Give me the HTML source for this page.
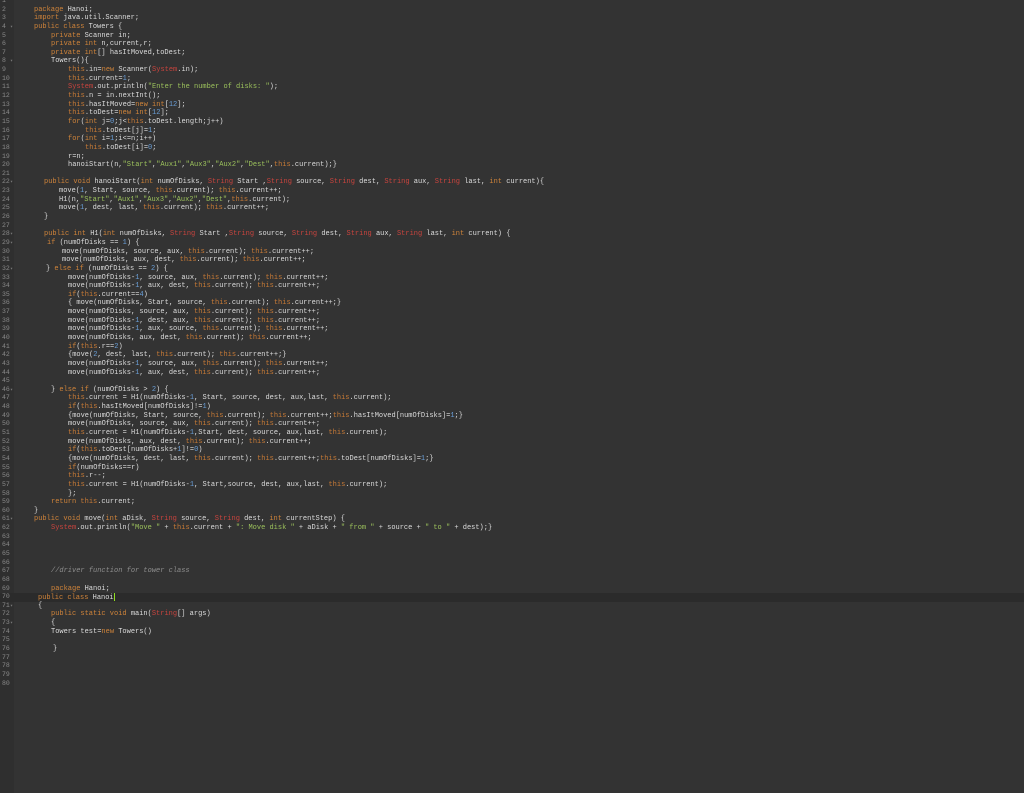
<!DOCTYPE html>
<html><head><meta charset="utf-8"><style>
html,body{margin:0;padding:0;width:1024px;height:793px;overflow:hidden;background:#333333;}
#g{position:absolute;left:0;top:0;width:14px;height:793px;background:#2f2f2f;}
#code{position:absolute;left:0;top:-3px;width:1024px;font-family:"Liberation Mono",monospace;font-size:7px;color:#dcdcdc;}
.l{position:relative;height:8.65px;line-height:8.65px;white-space:pre;}
.l .nm{position:absolute;left:2px;top:0;color:#8a8a8a;font-size:6.5px;}
.l .f{position:absolute;left:10px;top:0;color:#777;font-size:5px;}
.l .t{position:absolute;top:0;}
.k{color:#d0843a}.h{color:#c77a36}.s{color:#9cc25c}.n{color:#6a9fd8}.r{color:#c9443e}.c{color:#8f8f8f;font-style:italic}
.hl{background:#2b2b2b}
.cur{display:inline-block;width:1px;height:8px;background:#8fe020;vertical-align:middle}
</style></head><body>
<div id="g"></div>
<div id="code">
<div class="l"><span class="nm">1</span></div>
<div class="l"><span class="nm">2</span><span class="t" style="left:34px"><span class="k">package</span> Hanoi;</span></div>
<div class="l"><span class="nm">3</span><span class="t" style="left:34px"><span class="k">import</span> java.util.Scanner;</span></div>
<div class="l"><span class="nm">4</span><span class="f">▾</span><span class="t" style="left:34px"><span class="k">public class</span> Towers {</span></div>
<div class="l"><span class="nm">5</span><span class="t" style="left:51px"><span class="k">private</span> Scanner in;</span></div>
<div class="l"><span class="nm">6</span><span class="t" style="left:51px"><span class="k">private int</span> n,current,r;</span></div>
<div class="l"><span class="nm">7</span><span class="t" style="left:51px"><span class="k">private int</span>[] hasItMoved,toDest;</span></div>
<div class="l"><span class="nm">8</span><span class="f">▾</span><span class="t" style="left:51px">Towers(){</span></div>
<div class="l"><span class="nm">9</span><span class="t" style="left:68px"><span class="h">this</span>.in=<span class="k">new</span> Scanner(<span class="r">System</span>.in);</span></div>
<div class="l"><span class="nm">10</span><span class="t" style="left:68px"><span class="h">this</span>.current=<span class="n">1</span>;</span></div>
<div class="l"><span class="nm">11</span><span class="t" style="left:68px"><span class="r">System</span>.out.println(<span class="s">"Enter the number of disks: "</span>);</span></div>
<div class="l"><span class="nm">12</span><span class="t" style="left:68px"><span class="h">this</span>.n = in.nextInt();</span></div>
<div class="l"><span class="nm">13</span><span class="t" style="left:68px"><span class="h">this</span>.hasItMoved=<span class="k">new int</span>[<span class="n">12</span>];</span></div>
<div class="l"><span class="nm">14</span><span class="t" style="left:68px"><span class="h">this</span>.toDest=<span class="k">new int</span>[<span class="n">12</span>];</span></div>
<div class="l"><span class="nm">15</span><span class="t" style="left:68px"><span class="k">for</span>(<span class="k">int</span> j=<span class="n">0</span>;j&lt;<span class="h">this</span>.toDest.length;j++)</span></div>
<div class="l"><span class="nm">16</span><span class="t" style="left:85px"><span class="h">this</span>.toDest[j]=<span class="n">1</span>;</span></div>
<div class="l"><span class="nm">17</span><span class="t" style="left:68px"><span class="k">for</span>(<span class="k">int</span> i=<span class="n">1</span>;i&lt;=n;i++)</span></div>
<div class="l"><span class="nm">18</span><span class="t" style="left:85px"><span class="h">this</span>.toDest[i]=<span class="n">0</span>;</span></div>
<div class="l"><span class="nm">19</span><span class="t" style="left:68px">r=n;</span></div>
<div class="l"><span class="nm">20</span><span class="t" style="left:68px">hanoiStart(n,<span class="s">"Start"</span>,<span class="s">"Aux1"</span>,<span class="s">"Aux3"</span>,<span class="s">"Aux2"</span>,<span class="s">"Dest"</span>,<span class="h">this</span>.current);}</span></div>
<div class="l"><span class="nm">21</span></div>
<div class="l"><span class="nm">22</span><span class="f">▾</span><span class="t" style="left:44px"><span class="k">public void</span> hanoiStart(<span class="k">int</span> numOfDisks, <span class="r">String</span> Start ,<span class="r">String</span> source, <span class="r">String</span> dest, <span class="r">String</span> aux, <span class="r">String</span> last, <span class="k">int</span> current){</span></div>
<div class="l"><span class="nm">23</span><span class="t" style="left:59px">move(<span class="n">1</span>, Start, source, <span class="h">this</span>.current); <span class="h">this</span>.current++;</span></div>
<div class="l"><span class="nm">24</span><span class="t" style="left:59px">H1(n,<span class="s">"Start"</span>,<span class="s">"Aux1"</span>,<span class="s">"Aux3"</span>,<span class="s">"Aux2"</span>,<span class="s">"Dest"</span>,<span class="h">this</span>.current);</span></div>
<div class="l"><span class="nm">25</span><span class="t" style="left:59px">move(<span class="n">1</span>, dest, last, <span class="h">this</span>.current); <span class="h">this</span>.current++;</span></div>
<div class="l"><span class="nm">26</span><span class="t" style="left:44px">}</span></div>
<div class="l"><span class="nm">27</span></div>
<div class="l"><span class="nm">28</span><span class="f">▾</span><span class="t" style="left:44px"><span class="k">public int</span> H1(<span class="k">int</span> numOfDisks, <span class="r">String</span> Start ,<span class="r">String</span> source, <span class="r">String</span> dest, <span class="r">String</span> aux, <span class="r">String</span> last, <span class="k">int</span> current) {</span></div>
<div class="l"><span class="nm">29</span><span class="f">▾</span><span class="t" style="left:47px"><span class="k">if</span> (numOfDisks == <span class="n">1</span>) {</span></div>
<div class="l"><span class="nm">30</span><span class="t" style="left:62px">move(numOfDisks, source, aux, <span class="h">this</span>.current); <span class="h">this</span>.current++;</span></div>
<div class="l"><span class="nm">31</span><span class="t" style="left:62px">move(numOfDisks, aux, dest, <span class="h">this</span>.current); <span class="h">this</span>.current++;</span></div>
<div class="l"><span class="nm">32</span><span class="f">▾</span><span class="t" style="left:46px">} <span class="k">else if</span> (numOfDisks == <span class="n">2</span>) {</span></div>
<div class="l"><span class="nm">33</span><span class="t" style="left:68px">move(numOfDisks-<span class="n">1</span>, source, aux, <span class="h">this</span>.current); <span class="h">this</span>.current++;</span></div>
<div class="l"><span class="nm">34</span><span class="t" style="left:68px">move(numOfDisks-<span class="n">1</span>, aux, dest, <span class="h">this</span>.current); <span class="h">this</span>.current++;</span></div>
<div class="l"><span class="nm">35</span><span class="t" style="left:68px"><span class="k">if</span>(<span class="h">this</span>.current==<span class="n">4</span>)</span></div>
<div class="l"><span class="nm">36</span><span class="t" style="left:68px">{ move(numOfDisks, Start, source, <span class="h">this</span>.current); <span class="h">this</span>.current++;}</span></div>
<div class="l"><span class="nm">37</span><span class="t" style="left:68px">move(numOfDisks, source, aux, <span class="h">this</span>.current); <span class="h">this</span>.current++;</span></div>
<div class="l"><span class="nm">38</span><span class="t" style="left:68px">move(numOfDisks-<span class="n">1</span>, dest, aux, <span class="h">this</span>.current); <span class="h">this</span>.current++;</span></div>
<div class="l"><span class="nm">39</span><span class="t" style="left:68px">move(numOfDisks-<span class="n">1</span>, aux, source, <span class="h">this</span>.current); <span class="h">this</span>.current++;</span></div>
<div class="l"><span class="nm">40</span><span class="t" style="left:68px">move(numOfDisks, aux, dest, <span class="h">this</span>.current); <span class="h">this</span>.current++;</span></div>
<div class="l"><span class="nm">41</span><span class="t" style="left:68px"><span class="k">if</span>(<span class="h">this</span>.r==<span class="n">2</span>)</span></div>
<div class="l"><span class="nm">42</span><span class="t" style="left:68px">{move(<span class="n">2</span>, dest, last, <span class="h">this</span>.current); <span class="h">this</span>.current++;}</span></div>
<div class="l"><span class="nm">43</span><span class="t" style="left:68px">move(numOfDisks-<span class="n">1</span>, source, aux, <span class="h">this</span>.current); <span class="h">this</span>.current++;</span></div>
<div class="l"><span class="nm">44</span><span class="t" style="left:68px">move(numOfDisks-<span class="n">1</span>, aux, dest, <span class="h">this</span>.current); <span class="h">this</span>.current++;</span></div>
<div class="l"><span class="nm">45</span></div>
<div class="l"><span class="nm">46</span><span class="f">▾</span><span class="t" style="left:51px">} <span class="k">else if</span> (numOfDisks &gt; <span class="n">2</span>) {</span></div>
<div class="l"><span class="nm">47</span><span class="t" style="left:68px"><span class="h">this</span>.current = H1(numOfDisks-<span class="n">1</span>, Start, source, dest, aux,last, <span class="h">this</span>.current);</span></div>
<div class="l"><span class="nm">48</span><span class="t" style="left:68px"><span class="k">if</span>(<span class="h">this</span>.hasItMoved[numOfDisks]!=<span class="n">1</span>)</span></div>
<div class="l"><span class="nm">49</span><span class="t" style="left:68px">{move(numOfDisks, Start, source, <span class="h">this</span>.current); <span class="h">this</span>.current++;<span class="h">this</span>.hasItMoved[numOfDisks]=<span class="n">1</span>;}</span></div>
<div class="l"><span class="nm">50</span><span class="t" style="left:68px">move(numOfDisks, source, aux, <span class="h">this</span>.current); <span class="h">this</span>.current++;</span></div>
<div class="l"><span class="nm">51</span><span class="t" style="left:68px"><span class="h">this</span>.current = H1(numOfDisks-<span class="n">1</span>,Start, dest, source, aux,last, <span class="h">this</span>.current);</span></div>
<div class="l"><span class="nm">52</span><span class="t" style="left:68px">move(numOfDisks, aux, dest, <span class="h">this</span>.current); <span class="h">this</span>.current++;</span></div>
<div class="l"><span class="nm">53</span><span class="t" style="left:68px"><span class="k">if</span>(<span class="h">this</span>.toDest[numOfDisks+<span class="n">1</span>]!=<span class="n">0</span>)</span></div>
<div class="l"><span class="nm">54</span><span class="t" style="left:68px">{move(numOfDisks, dest, last, <span class="h">this</span>.current); <span class="h">this</span>.current++;<span class="h">this</span>.toDest[numOfDisks]=<span class="n">1</span>;}</span></div>
<div class="l"><span class="nm">55</span><span class="t" style="left:68px"><span class="k">if</span>(numOfDisks==r)</span></div>
<div class="l"><span class="nm">56</span><span class="t" style="left:68px"><span class="h">this</span>.r--;</span></div>
<div class="l"><span class="nm">57</span><span class="t" style="left:68px"><span class="h">this</span>.current = H1(numOfDisks-<span class="n">1</span>, Start,source, dest, aux,last, <span class="h">this</span>.current);</span></div>
<div class="l"><span class="nm">58</span><span class="t" style="left:68px">};</span></div>
<div class="l"><span class="nm">59</span><span class="t" style="left:51px"><span class="k">return</span> <span class="h">this</span>.current;</span></div>
<div class="l"><span class="nm">60</span><span class="t" style="left:34px">}</span></div>
<div class="l"><span class="nm">61</span><span class="f">▾</span><span class="t" style="left:34px"><span class="k">public void</span> move(<span class="k">int</span> aDisk, <span class="r">String</span> source, <span class="r">String</span> dest, <span class="k">int</span> currentStep) {</span></div>
<div class="l"><span class="nm">62</span><span class="t" style="left:51px"><span class="r">System</span>.out.println(<span class="s">"Move "</span> + <span class="h">this</span>.current + <span class="s">": Move disk "</span> + aDisk + <span class="s">" from "</span> + source + <span class="s">" to "</span> + dest);}</span></div>
<div class="l"><span class="nm">63</span></div>
<div class="l"><span class="nm">64</span></div>
<div class="l"><span class="nm">65</span></div>
<div class="l"><span class="nm">66</span></div>
<div class="l"><span class="nm">67</span><span class="t" style="left:51px"><span class="c">//driver function for tower class</span></span></div>
<div class="l"><span class="nm">68</span></div>
<div class="l"><span class="nm">69</span><span class="t" style="left:51px"><span class="k">package</span> Hanoi;</span></div>
<div class="l hl"><span class="nm">70</span><span class="t" style="left:38px"><span class="k">public class</span> Hanoi<span class="cur"></span></span></div>
<div class="l"><span class="nm">71</span><span class="f">▾</span><span class="t" style="left:38px">{</span></div>
<div class="l"><span class="nm">72</span><span class="t" style="left:51px"><span class="k">public static void</span> main(<span class="r">String</span>[] args)</span></div>
<div class="l"><span class="nm">73</span><span class="f">▾</span><span class="t" style="left:51px">{</span></div>
<div class="l"><span class="nm">74</span><span class="t" style="left:51px">Towers test=<span class="k">new</span> Towers()</span></div>
<div class="l"><span class="nm">75</span></div>
<div class="l"><span class="nm">76</span><span class="t" style="left:53px">}</span></div>
<div class="l"><span class="nm">77</span></div>
<div class="l"><span class="nm">78</span></div>
<div class="l"><span class="nm">79</span></div>
<div class="l"><span class="nm">80</span></div>
</div>
</body></html>
